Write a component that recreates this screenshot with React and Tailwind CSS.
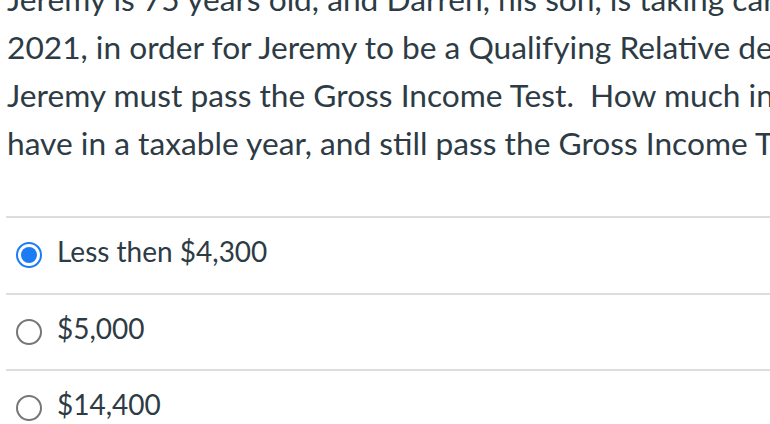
import React from "react";

const lines = [
  "Jeremy is 75 years old, and Darren, his son, is taking care of him. In",
  "2021, in order for Jeremy to be a Qualifying Relative dependent of Darren,",
  "Jeremy must pass the Gross Income Test.\u00a0 How much income can Jeremy",
  "have in a taxable year, and still pass the Gross Income Test?",
];

const options = [
  { label: "Less then $4,300", checked: true },
  { label: "$5,000", checked: false },
  { label: "$14,400", checked: false },
];

function Radio({ checked }) {
  if (checked) {
    return (
      <div className="mt-[7px] w-[26px] h-[26px] rounded-full border-[2.5px] border-[#1c7cf4] flex items-center justify-center shrink-0">
        <div className="w-[16px] h-[16px] rounded-full bg-[#1c7cf4]" />
      </div>
    );
  }
  return <div className="mt-[7px] w-[26px] h-[26px] rounded-full border-[2px] border-[#767676] shrink-0" />;
}

export default function App() {
  return (
    <div
      className="w-[770px] h-[424px] overflow-hidden bg-white text-[#2d3b45]"
      style={{ fontFamily: "Lato, 'Noto Sans', sans-serif" }}
    >
      <div className="pl-[7px] mt-[-25px] text-[31.7px] leading-[48px]">
        {lines.map((l, i) => (
          <div key={i} className="whitespace-nowrap">
            {l}
          </div>
        ))}
      </div>
      <div className="ml-[6px] mt-[49px]">
        {options.map((o, i) => (
          <div key={i} className="border-t-[2px] border-[#dddddd] h-[76.5px] flex items-start pt-[17px] pl-[10px] gap-[15px]">
            <Radio checked={o.checked} />
            <span className="text-[28px] leading-[32px]">{o.label}</span>
          </div>
        ))}
      </div>
    </div>
  );
}
